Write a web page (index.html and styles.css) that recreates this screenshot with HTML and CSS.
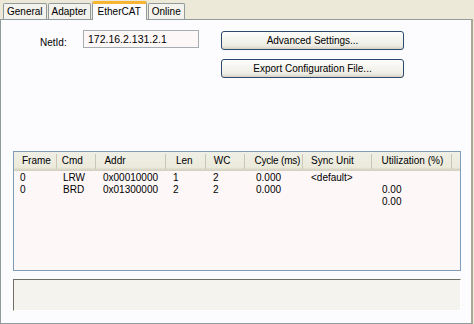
FILE: index.html
```html
<!DOCTYPE html>
<html lang="en">
<head>
  <meta charset="UTF-8" />
  <title>EtherCAT</title>
  <link rel="stylesheet" href="styles.css">
</head>
<body>
  <div class="tabs">
    <div class="tab">General</div>
    <div class="tab">Adapter</div>
    <div class="tab tab-active">EtherCAT</div>
    <div class="tab">Online</div>
  </div>

  <div class="panel">
    <div class="top-row">
      <div class="netid">
        <label class="netid-label">NetId:</label>
        <div class="netid-input">172.16.2.131.2.1</div>
      </div>
      <div class="buttons">
        <button class="btn">Advanced Settings...</button>
        <button class="btn">Export Configuration File...</button>
      </div>
    </div>

    <div class="list">
      <div class="list-head">
        <div class="col c-frame">Frame</div>
        <div class="col c-cmd">Cmd</div>
        <div class="col c-addr">Addr</div>
        <div class="col c-len">Len</div>
        <div class="col c-wc">WC</div>
        <div class="col c-cycle">Cycle (ms)</div>
        <div class="col c-sync">Sync Unit</div>
        <div class="col c-util">Utilization (%)</div>
        <div class="col c-rest"></div>
      </div>
      <div class="list-row">
        <div class="col c-frame">0</div>
        <div class="col c-cmd">LRW</div>
        <div class="col c-addr">0x00010000</div>
        <div class="col c-len">1</div>
        <div class="col c-wc">2</div>
        <div class="col c-cycle">0.000</div>
        <div class="col c-sync">&lt;default&gt;</div>
        <div class="col c-util"></div>
      </div>
      <div class="list-row">
        <div class="col c-frame">0</div>
        <div class="col c-cmd">BRD</div>
        <div class="col c-addr">0x01300000</div>
        <div class="col c-len">2</div>
        <div class="col c-wc">2</div>
        <div class="col c-cycle">0.000</div>
        <div class="col c-sync"></div>
        <div class="col c-util">0.00</div>
      </div>
      <div class="list-row">
        <div class="col c-frame"></div>
        <div class="col c-cmd"></div>
        <div class="col c-addr"></div>
        <div class="col c-len"></div>
        <div class="col c-wc"></div>
        <div class="col c-cycle"></div>
        <div class="col c-sync"></div>
        <div class="col c-util">0.00</div>
      </div>
    </div>

    <div class="status"></div>
  </div>
</body>
</html>
```

FILE: styles.css
```css
* { margin: 0; padding: 0; box-sizing: border-box; }
body {
  font-family: "Liberation Sans", Arial, sans-serif;
  font-size: 10px;
  color: #000;
  background-color: #ece9d8;
  width: 474px;
  height: 324px;
  overflow: hidden;
}

.tabs {
  display: flex;
  align-items: flex-end;
  height: 19px;
  padding-left: 3px;
}

.tab {
  height: 16px;
  line-height: 15px;
  padding: 0 3px;
  border: 1px solid #919b9c;
  border-bottom: none;
  background-color: #f3f2ec;
  margin-right: 1px;
  border-radius: 2px 2px 0 0;
}

.tab-active {
  height: 19px;
  line-height: 16px;
  background-color: #fcfcfe;
  border-top: 3px solid #f8b534;
  padding: 0 5px;
  position: relative;
  top: 1px;
}

.panel {
  height: 305px;
  margin-right: 1px;
  border: 1px solid #919b9c;
  border-right: 2px solid #aca899;
  background-color: #fcfcfe;
  padding: 10px 12px 0 12px;
}

.top-row {
  display: flex;
  height: 121px;
}

.netid {
  display: flex;
  align-items: flex-start;
  width: 207px;
}

.netid-label {
  padding-left: 27px;
  box-sizing: content-box;
  margin-top: 7px;
  width: 43px;
}

.netid-input {
  width: 116px;
  height: 18px;
  border: 1px solid #a5acb2;
  background-color: #fdf7f7;
  padding: 2px 0 0 4px;
  font-size: 10.5px;
}

.buttons {
  display: flex;
  flex-direction: column;
  gap: 9px;
  margin-left: 1px;
  margin-top: 1px;
}

.btn {
  width: 183px;
  height: 19px;
  font-family: inherit;
  font-size: 10px;
  color: #000;
  border: 1px solid #2c4a6c;
  border-radius: 3px;
  background: linear-gradient(#fdfdfb, #eeede5 80%, #d6d0c5);
}

.list {
  width: 448px;
  height: 120px;
  border: 1px solid #7f9db9;
  background-color: #fdf7f7;
}

.list-head {
  display: flex;
  height: 19px;
  background: linear-gradient(#f0efe6, #ebeadb 85%, #d6d3c4);
  border-bottom: 1px solid #d6d2c2;
}

.list-head .col {
  border-right: 1px solid #cbc7b8;
  height: 15px;
  margin-top: 2px;
  line-height: 14px;
}

.list-row {
  display: flex;
  height: 12px;
  line-height: 12px;
}

.list-head + .list-row { margin-top: 1px; }

.col {
  padding-left: 8px;
  white-space: nowrap;
  overflow: hidden;
}

.list-row .col { padding-left: 6px; }

.c-frame { width: 43px; }
.c-cmd { width: 40px; padding-left: 5px; }
.c-addr { width: 70px; }
.c-len { width: 40px; padding-left: 10px; }
.c-wc { width: 40px; }
.c-cycle { width: 58px; padding-left: 9px; }
.c-sync { width: 69px; }
.c-util { width: 81px; padding-left: 10px; }
.c-rest { flex: 1; border-right: none !important; }

.list-head .c-cycle { letter-spacing: -0.2px; }
.list-row .c-cycle { padding-left: 9px; }
.list-row .c-util { padding-left: 8px; }

.status {
  width: 448px;
  height: 32px;
  margin-top: 8px;
  border-top: 1px solid #716f64;
  border-left: 1px solid #716f64;
  border-bottom: 1px solid #fff;
  border-right: 1px solid #fff;
  background-color: #f4f3ee;
}
```
